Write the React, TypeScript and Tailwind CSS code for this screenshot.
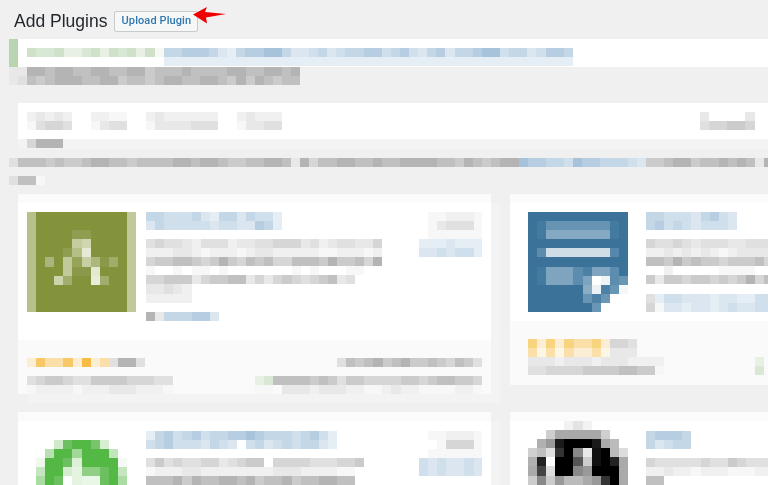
import clsx from "clsx";

const CELL = 9.1;

const palette: Record<string, string> = {
  "1": "#f7f7f7", "2": "#f0f0f0", "3": "#e8e8e8", "4": "#e0e0e0", "5": "#d6d6d6",
  "6": "#cbcbcb", "7": "#c0c0c0", "8": "#b4b4b4", "9": "#a8a8a8",
  a: "#e6eef5", b: "#dbe6f0", c: "#cfdfeb", d: "#c4d7e7", e: "#b7cee2", f: "#a7c3dc",
  g: "#e7f0e3", h: "#d9e7d5", i: "#cfe1c9", j: "#f5f8f3",
  o: "#fbeed4", p: "#fadfa8", q: "#f8c868", r: "#f8bb45", s: "#fdf5e6", t: "#f8d47e",
};

// a row is either one palette char per cell, or spaced hex tokens with "*n" repeats
function parseRow(row: string): (string | null)[] {
  if (!/[ *]/.test(row)) {
    return row.split("").map((ch) => palette[ch] ?? null);
  }
  return row.split(" ").flatMap((token) => {
    const [hex, times] = token.split("*");
    const color = hex === "-" ? null : `#${hex}`;
    return Array.from({ length: Number(times ?? 1) }, () => color);
  });
}

function Pix({ rows, className }: { rows: string[]; className?: string }) {
  const grid = rows.map(parseRow);
  const cols = Math.max(...grid.map((r) => r.length));
  return (
    <svg
      width={cols * CELL}
      height={rows.length * CELL}
      viewBox={`0 0 ${cols * CELL} ${rows.length * CELL}`}
      shapeRendering="crispEdges"
      className={clsx("block shrink-0 blur-[0.5px]", className)}
    >
      {grid.map((row, y) =>
        row.map((color, x) =>
          color ? <rect key={`${x}-${y}`} x={x * CELL} y={y * CELL} width={CELL} height={CELL} fill={color} /> : null
        )
      )}
    </svg>
  );
}

const O = "83933c";
const oliveIcon = [
  `b6c08a ${O}*10 bfc99a`,
  `b6c08a ${O}*10 bfc99a`,
  `b6c08a ${O}*4 8f9d50*2 ${O}*4 bfc99a`,
  `b6c08a ${O}*4 c5cc9e d0d6b0 ${O}*4 bfc99a`,
  `b6c08a ${O}*3 8f9d50 b4bf87 e6ead4 ${O}*4 bfc99a`,
  `b6c08a ${O} a9b57a ${O} c1c99a 96a45a c6cea2 acb77c 8a9949 9fac6a ${O} bfc99a`,
  `b6c08a ${O}*3 c1c99a 8a9949*2 e4e8cf ${O}*3 bfc99a`,
  `b6c08a ${O}*2 cdd3aa a0ad6d ${O}*2 e9ecd9 a0ad6d ${O}*2 bfc99a`,
  `b6c08a ${O}*10 bfc99a`,
  `b6c08a ${O}*10 bfc99a`,
  `b6c08a ${O}*10 bfc99a`,
];

const B = "3b7299";
const blueIcon = [
  `${B}*11`,
  `${B} 437a9f 6794b3*7 437a9f ${B}`,
  `${B} 437a9f 85a9c3*7 437a9f ${B}`,
  `${B}*11`,
  `${B} 5d8dae cfdde7*7 5588aa ${B}`,
  `${B}*11`,
  `${B} 437a9f 7ea4be*3 5d8dae 4c81a5 7fa4bf*2 5d8dae ${B}`,
  `${B} 437a9f 7ea4be*3 5d8dae 7fa4bf ffffff eef3f6 5d8dae 6a96b5`,
  `${B}*6 8aadc5 ecf1f5 4d82a6 6a96b5 f4f8fa`,
  `${B}*6 6a96b5 4d82a6 6a96b5 ffffff*2`,
  `${B}*7 6a96b5 ffffff*3`,
];

const G = "54b845";
const greenIcon = [
  `-*12`,
  `-*3 cfeac9 6cc05f ${G}*2 78c56c d8eed3 -*3`,
  `-*2 b9e0b2 ${G}*2 a2d79a ${G}*3 c3e5bd -*2`,
  `- f0f8ee ${G}*2 6cc05f dcf0d8 ${G}*4 f5fbf4 -`,
  `- c5e6bf ${G}*2 d4edcf e4f4e1 90d085*2 6cc05f ${G} c5e6bf -`,
  `- abdca3 ${G} 6cc05f ffffff e4f4e1 eaf6e8*2 6cc05f ${G} abdca3 -`,
  `- 9ed695 ${G}*2 ffffff eaf6e8 ffffff*2 ${G}*2 9ed695 -`,
];

const badgeIcon = [
  `-*4 f2f2f2 e3e3e3 f2f2f2 -*4`,
  `-*2 cfcfcf a8a8a8*5 cfcfcf -*2`,
  `- b0b0b0 999999 1a1a1a 000000*3 1a1a1a aaaaaa bbbbbb -`,
  `d0d0d0 c0c0c0 e0e0e0 333333 000000 888888 e8e8e8 111111 000000 bbbbbb dddddd`,
  `b0b0b0 222222 ffffff 000000*2 555555 cccccc 111111 000000 222222 aaaaaa`,
  `aaaaaa 444444 dddddd 000000*2 888888 999999 000000*3 aaaaaa`,
  `cccccc 888888 cccccc 999999 bbbbbb*2 aaaaaa 999999 333333 000000 aaaaaa`,
];

type Plugin = {
  icon: string[];
  iconClass?: string;
  title: string[];
  desc: string[];
  action?: string[];
  wide?: boolean;
  footer?: "left" | "right";
};

const plugins: Plugin[] = [
  {
    icon: oliveIcon,
    title: ["ddcccdbaddbdcca", "bdcccccbccbbeda"],
    desc: [
      "45443244423344555342344335",
      "22233212221233222221122212",
      "56677656865767557776866758",
      "1..1.11.1.......1.1...11..",
      "55666356677353565456734",
      "33432",
      "22222",
      ".",
      "83dddeeb",
    ],
    action: [".112221", ".134441", ".111111", "aaabaaa", "bbcbcca"],
    footer: "left",
  },
  {
    icon: blueIcon,
    title: ["ddcccbdecb", "decdcbcccb"],
    desc: [
      "54454344433444",
      "22323232123333",
      "77686766566675",
      "..2.....1111..",
      "63665665656857",
      ".",
      "4accbbbabbaacc",
      "51bbabbabcbbcc",
    ],
    wide: true,
    footer: "right",
  },
  {
    icon: greenIcon,
    title: ["adecdecddeefedddcdeca", "cdecccbdcb.cdbcdcddba"],
    desc: [
      "4645445534566.5555444556",
      "12223322222222333222211",
      "77786877887867786778877",
    ],
    action: [".112221", "..15551", ".111111", "cbcbbcb", "cbcbbcb"],
  },
  {
    icon: badgeIcon,
    iconClass: "-mt-[9.1px]",
    title: ["deeed", "dbcdd"],
    desc: ["54444454465444", "22322122211122", "77............"],
    wide: true,
  },
];

function LeftFooter() {
  return (
    <div className="flex h-[54.6px] flex-col gap-[9.1px] bg-[#fafafa] px-[9.1px] pt-[18.2px]">
      <div className="flex justify-between">
        <Pix rows={["oqppqorop4884"]} />
        <Pix rows={["4767867866765764"]} />
      </div>
      <div className="flex justify-between">
        <Pix rows={["4566544666655544", "1222212223332221"]} />
        <Pix rows={["gh77776764665555665677665", "11.3332333221123221111221"]} />
      </div>
    </div>
  );
}

function RightFooter() {
  return (
    <div className="flex h-[64px] justify-between bg-[#fafafa] pl-[18.2px] pr-[4px] pt-[18.2px]">
      <Pix rows={["tototppto554", "pspspoops333", "333233323332222", "445555666677661"]} />
      <Pix rows={[".", ".", "g", "h"]} />
    </div>
  );
}

function PluginCard({ plugin }: { plugin: Plugin }) {
  return (
    <div className={clsx("self-start", !plugin.wide && "shadow-[9.1px_9.1px_0_0_#f3f3f3]")}>
      <div className="h-[9.1px] bg-[#fbfbfb]" />
      <div
        className={clsx(
          "flex bg-white pt-[9.1px]",
          plugin.wide ? "pl-[18.2px]" : "px-[9.1px]",
          plugin.footer === "right" ? "h-[117.9px]" : "h-[136.5px]"
        )}
      >
        <Pix rows={plugin.icon} className={plugin.iconClass} />
        <div className={clsx("flex min-w-0 flex-col gap-[9.1px]", plugin.wide ? "ml-[18.2px]" : "ml-[9.1px]")}>
          <Pix rows={plugin.title} />
          <Pix rows={plugin.desc} />
        </div>
        {plugin.action && <Pix rows={plugin.action} className="ml-auto" />}
      </div>
      {plugin.footer === "left" && <LeftFooter />}
      {plugin.footer === "right" && <RightFooter />}
    </div>
  );
}

export default function App() {
  return (
    <div className="relative h-[485px] w-[768px] overflow-hidden bg-[#f0f0f1] font-['Liberation_Sans',sans-serif]">
      <header className="flex h-[39.4px] items-center pl-[14px] pt-[3px]">
        <h1 className="mt-[2px] text-[17.5px] leading-none text-[#23282d] blur-[0.3px]">Add Plugins</h1>
        <button
          type="button"
          className="ml-[7px] h-[21px] w-[84px] rounded-[2px] border border-[#c9cacc] bg-[#f6f7f7] font-['Roboto',sans-serif] text-[11px] font-medium tracking-[0.1px] text-[#2f78b0]"
        >
          <span className="blur-[0.3px]">Upload Plugin</span>
        </button>
      </header>

      {/* red pointer drawn over the screenshot */}
      <svg className="absolute left-[190px] top-[4px]" width="40" height="22" viewBox="0 0 40 22">
        <path d="M3 10.5 L17 3 L15 8 L36 10 L16 13.5 L17 19.5 Z" fill="#f00000" />
      </svg>

      <section className="ml-[9.1px] flex h-[27.3px] bg-white">
        <div className="w-[9.1px] bg-[#b8d4b0]" />
        <Pix
          className="ml-[9.1px] mt-[9.1px]"
          rows={[
            "ihhigghigihigijddeeedbadeeffdbbcdbcddeecdecbdebddeffcddbceed",
            "...............aaaaaaaaaaaaaaaaaaaaaaaaaaaaaaaaaaaaaaaaaaaaa",
          ]}
        />
      </section>
      <Pix
        className="ml-[9.1px]"
        rows={["338878877887788677787777887788788", "347678887788677678877887686876778"].map((r) => r.slice(0, 32))}
      />

      <section className="ml-[18.2px] mt-[18.2px] flex h-[36.4px] justify-between bg-white pl-[9.1px] pr-[13px] pt-[9.1px]">
        <div className="flex gap-[18.2px]">
          <Pix rows={["23232", "14554"]} />
          <Pix rows={["2211", "1344"]} />
          <Pix rows={["23222222", "13333444"]} />
          <Pix rows={["23222", "13344"]} />
        </div>
        <Pix rows={["3....3", "455665"]} />
      </section>
      <div className="ml-[18.2px] bg-[#f3f3f3] pl-[9.1px]">
        <Pix rows={["5888"]} />
      </div>
      <Pix
        className="ml-[9.1px] mt-[9.1px]"
        rows={["47776766788776777788788766778873857788778778888776876788feeddcfeedddcb66788677878738"]}
      />
      <Pix className="ml-[9.1px] mt-[9.1px]" rows={["4771"]} />

      <main className="ml-[18.2px] mt-[9.1px] grid grid-cols-[473.2px_258.4px] gap-x-[18.2px] gap-y-[18.2px]">
        {plugins.map((plugin, i) => (
          <PluginCard key={i} plugin={plugin} />
        ))}
      </main>
    </div>
  );
}
